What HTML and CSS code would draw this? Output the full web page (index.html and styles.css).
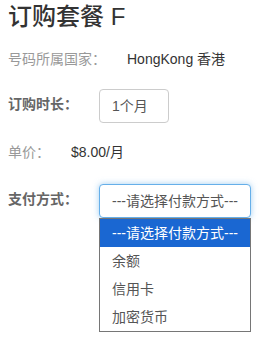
FILE: index.html
```html
<!DOCTYPE html>
<html lang="zh-CN">
<head>
    <meta charset="UTF-8">
    <meta name="viewport" content="width=device-width, initial-scale=1.0">
    <title>订购套餐</title>
    <link rel="stylesheet" href="styles.css">
</head>
<body>

    <div class="order">
        <h2>订购套餐 F</h2>

        <div class="row row-country">
            <span class="label">号码所属国家：</span>
            <span class="value">HongKong 香港</span>
        </div>

        <div class="row row-duration">
            <label class="label strong">订购时长：</label>
            <div class="select small">1个月</div>
        </div>

        <div class="row row-price">
            <span class="label">单价：</span>
            <span class="value">$8.00/月</span>
        </div>

        <div class="row row-pay">
            <label class="label strong">支付方式：</label>
            <div class="select-wrap">
                <div class="select wide focus">---请选择付款方式---</div>
                <div class="dropdown">
                    <div class="item active">---请选择付款方式---</div>
                    <div class="item">余额</div>
                    <div class="item">信用卡</div>
                    <div class="item">加密货币</div>
                </div>
            </div>
        </div>
    </div>

</body>
</html>
```

FILE: styles.css
```css
* {
    margin: 0;
    padding: 0;
    box-sizing: border-box;
}

body {
    background: #fff;
    color: #333;
    font-family: "Liberation Sans", "Noto Sans CJK SC", sans-serif;
    font-size: 14px;
    line-height: 20px;
}

.order {
    padding: 0 8px;
}

h2 {
    font-size: 24px;
    font-weight: 500;
    line-height: 34px;
    color: #333;
}

/* Rows */
.row {
    display: flex;
    align-items: flex-start;
}

.row-country {
    margin-top: 15px;
}

.row-duration {
    margin-top: 20px;
}

.row-price {
    margin-top: 19px;
}

.row-pay {
    margin-top: 22px;
}

.label {
    color: #999;
    margin-right: 21px;
}

.label.strong {
    color: #666;
    font-weight: bold;
    padding-top: 5px;
}

.value {
    color: #333;
}

/* Select boxes */
.select {
    height: 34px;
    padding: 6px 12px;
    border: 1px solid #ccc;
    border-radius: 4px;
    color: #555;
    background: #fff;
}

.select.small {
    width: 70px;
}

.select.wide {
    width: 152px;
}

.select.focus {
    border-color: #66afe9;
    box-shadow: 0 0 6px rgba(102, 175, 233, 0.6);
}

.select-wrap {
    display: flex;
    flex-direction: column;
}

/* Open dropdown */
.dropdown {
    width: 152px;
    margin-top: 0;
    background: #fff;
    border: 1px solid #767676;
}

.item {
    height: 28px;
    line-height: 28px;
    padding-left: 12px;
    color: #555;
}

.item.active {
    background: #1a67d2;
    color: #fff;
}
```
